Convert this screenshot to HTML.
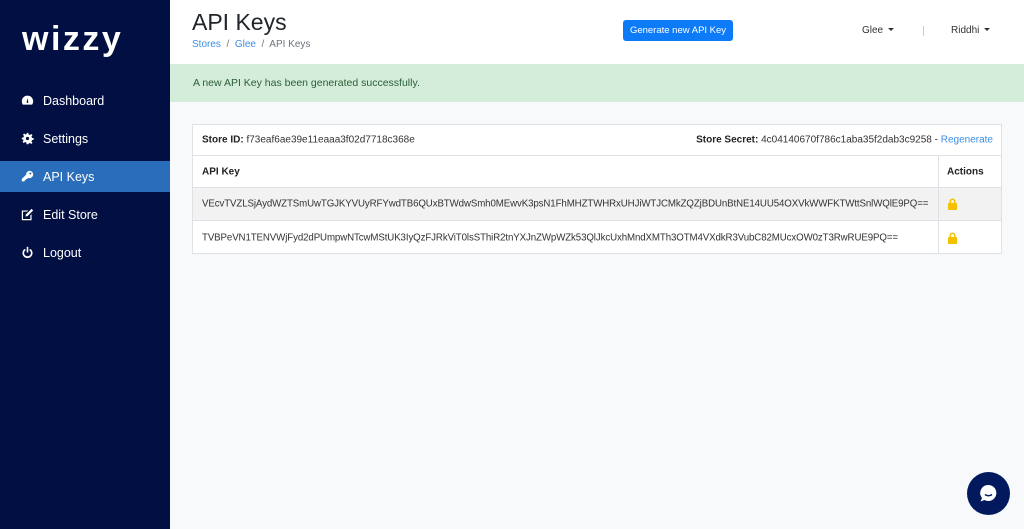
<!DOCTYPE html>
<html><head><meta charset="utf-8">
<style>
*{box-sizing:border-box;margin:0;padding:0}
body{width:1024px;height:529px;overflow:hidden;font-family:"Liberation Sans",sans-serif;background:#f8f9fa;position:relative}
.side{position:absolute;left:0;top:0;width:170px;height:529px;background:#020f42}
.logo{position:absolute;left:22px;top:20px;color:#fff;font-size:34px;font-weight:bold;letter-spacing:2.5px;font-family:"Liberation Sans",sans-serif}
.nav{position:absolute;left:0;width:170px;height:31px;color:#fff;font-size:12.5px;display:flex;align-items:center;padding-left:21px}
.nav svg{width:13px;height:13px;margin-right:9px;fill:#fff}
.nav.act{background:#2a6ebb}
.head{position:absolute;left:170px;top:0;width:854px;height:64px;background:#fff}
h1{position:absolute;left:22px;top:9px;font-size:23px;font-weight:normal;color:#212529}
.bc{position:absolute;left:22px;top:39px;font-size:10px;color:#6c757d}
.bc a{color:#3a8ee6;text-decoration:none}
.btn{position:absolute;left:453px;top:20px;width:110px;height:21px;background:#0d7bf7;border-radius:3px;color:#fff;font-size:9.5px;text-align:center;line-height:21px}
.dd{position:absolute;top:25px;font-size:10px;color:#333}
.dd:after{content:"";display:inline-block;margin-left:5px;border-left:3px solid transparent;border-right:3px solid transparent;border-top:3px solid #333;vertical-align:2px}
.alert{position:absolute;left:170px;top:64px;width:854px;height:38px;background:#d4eddb;color:#2a5f35;font-size:10.5px;padding:13px 0 0 23px}
.card{position:absolute;left:192px;top:124px;width:810px;height:130px;background:#fff;border:1px solid #dee2e6;font-size:10px;color:#333}
.r{position:absolute;left:0;width:808px;border-bottom:1px solid #dee2e6}
.r span{position:absolute;top:50%;transform:translateY(-50%)}
.k{font-size:9.7px;letter-spacing:-0.1px;white-space:nowrap;max-width:738px;overflow:hidden}
.vl{position:absolute;left:745px;top:31px;width:1px;height:97px;background:#dee2e6}
b{color:#222}
.lock{position:absolute;left:754px;top:50%;transform:translateY(-50%)}
.chat{position:absolute;left:967px;top:472px;width:43px;height:43px;border-radius:50%;background:#03195e}
</style></head><body>
<div class="side">
<div class="logo">wizzy</div>
<div class="nav" style="top:85px"><svg viewBox="0 0 16 16"><path d="M8 2a7 7 0 0 0-7 7c0 1.5.5 3 1.3 4h11.4A7 7 0 0 0 8 2zm0 3l1 5a1 1 0 1 1-2 0z"/></svg>Dashboard</div>
<div class="nav" style="top:123px"><svg viewBox="0 0 16 16"><path d="M7 1h2l.4 2 1.6.7 1.7-1.2 1.4 1.4-1.2 1.7.7 1.6 2 .4v2l-2 .4-.7 1.6 1.2 1.7-1.4 1.4-1.7-1.2-1.6.7L9 15H7l-.4-2-1.6-.7-1.7 1.2-1.4-1.4 1.2-1.7L2.4 9 1 9V7l2-.4.7-1.6L2.5 3.3l1.4-1.4 1.7 1.2L7 2.4zM8 6a2 2 0 1 0 0 4 2 2 0 0 0 0-4z"/></svg>Settings</div>
<div class="nav act" style="top:161px"><svg viewBox="0 0 16 16"><path d="M10.5 1a4.5 4.5 0 1 1-1.6 8.7L7.5 11H6v1.5H4.5V14H1v-3l5.3-5.3A4.5 4.5 0 0 1 10.5 1zm1 2a1.3 1.3 0 1 0 0 2.6 1.3 1.3 0 0 0 0-2.6z"/></svg>API Keys</div>
<div class="nav" style="top:199px"><svg viewBox="0 0 16 16"><path d="M1 3h8L7.5 4.5H2.5v9h9V9l1.5-1.5V15H1zM13 1l2 2-7 7-2.5.5L6 8z"/></svg>Edit Store</div>
<div class="nav" style="top:237px"><svg viewBox="0 0 16 16"><path d="M7 1h2v7H7zM4.5 3.5l1.4 1.4a4.2 4.2 0 1 0 4.2 0l1.4-1.4a6.2 6.2 0 1 1-7 0z"/></svg>Logout</div>
</div>
<div class="head">
<h1>API Keys</h1>
<div class="bc"><a>Stores</a> &nbsp;/&nbsp; <a>Glee</a> &nbsp;/&nbsp; API Keys</div>
<div class="btn">Generate new API Key</div>
<div class="dd" style="left:692px">Glee</div>
<div style="position:absolute;left:753px;top:26px;width:1px;height:10px;background:#ccc"></div>
<div class="dd" style="left:781px">Riddhi</div>
</div>
<div class="alert">A new API Key has been generated successfully.</div>
<div class="card">
<div class="r" style="top:0;height:31px"><span style="left:9px"><b>Store ID:</b> f73eaf6ae39e11eaaa3f02d7718c368e</span><span style="right:8px"><b>Store Secret:</b> 4c04140670f786c1aba35f2dab3c9258 - <span style="position:static;transform:none;color:#3a8ee6">Regenerate</span></span></div>
<div class="r" style="top:31px;height:32px"><span style="left:9px"><b>API Key</b></span><span style="left:754px"><b>Actions</b></span></div>
<div class="r" style="top:63px;height:33px;background:#f2f2f2"><span class="k" style="left:9px">VEcvTVZLSjAydWZTSmUwTGJKYVUyRFYwdTB6QUxBTWdwSmh0MEwvK3psN1FhMHZTWHRxUHJiWTJCMkZQZjBDUnBtNE14UU54OXVkWWFKTWttSnlWQlE9PQ==</span><svg class="lock" width="11" height="12" viewBox="0 0 11 12"><path d="M2.5 5V3.5a3 3 0 0 1 6 0V5H7V3.5a1.5 1.5 0 0 0-3 0V5z" fill="#f5c000"/><rect x="1" y="5" width="9" height="7" rx="1" fill="#f5c000"/></svg></div>
<div class="r" style="top:96px;height:33px;border-bottom:none"><span class="k" style="left:9px">TVBPeVN1TENVWjFyd2dPUmpwNTcwMStUK3IyQzFJRkViT0lsSThiR2tnYXJnZWpWZk53QlJkcUxhMndXMTh3OTM4VXdkR3VubC82MUcxOW0zT3RwRUE9PQ==</span><svg class="lock" width="11" height="12" viewBox="0 0 11 12"><path d="M2.5 5V3.5a3 3 0 0 1 6 0V5H7V3.5a1.5 1.5 0 0 0-3 0V5z" fill="#f5c000"/><rect x="1" y="5" width="9" height="7" rx="1" fill="#f5c000"/></svg></div>
<div class="vl"></div>
</div>
<div class="chat"><svg width="43" height="43" viewBox="0 0 43 43"><path d="M21.5 13a8 8 0 1 1-4 15l-4 1.5 1.5-3.5A8 8 0 0 1 21.5 13z" fill="#fff"/><path d="M18 22.5q3.5 2.5 7 0" stroke="#03195e" stroke-width="1.5" fill="none"/></svg></div>
</body></html>
